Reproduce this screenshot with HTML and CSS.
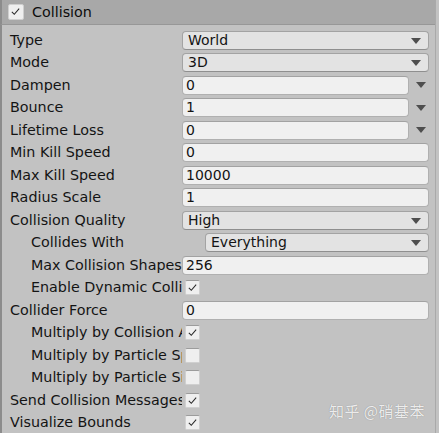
FILE: index.html
```html
<!DOCTYPE html>
<html>
<head>
<meta charset="utf-8">
<link rel="stylesheet" href="styles.css">
</head>
<body>
<div class="frame">
  <div class="header">
    <span class="check on"><svg viewBox="0 0 16 16"><path d="M3.5 8.5 L6.5 11.5 L12.5 4.5" /></svg></span>
    <span class="title">Collision</span>
  </div>
  <div class="panel">
    <div class="row"><span class="label">Type</span><div class="dd">World<i class="tri"></i></div></div>
    <div class="row"><span class="label">Mode</span><div class="dd">3D<i class="tri"></i></div></div>
    <div class="row"><span class="label">Dampen</span><div class="withArrow"><div class="tf">0</div><i class="tri"></i></div></div>
    <div class="row"><span class="label">Bounce</span><div class="withArrow"><div class="tf">1</div><i class="tri"></i></div></div>
    <div class="row"><span class="label">Lifetime Loss</span><div class="withArrow"><div class="tf">0</div><i class="tri"></i></div></div>
    <div class="row"><span class="label">Min Kill Speed</span><div class="tf">0</div></div>
    <div class="row"><span class="label">Max Kill Speed</span><div class="tf">10000</div></div>
    <div class="row"><span class="label">Radius Scale</span><div class="tf">1</div></div>
    <div class="row"><span class="label">Collision Quality</span><div class="dd">High<i class="tri"></i></div></div>
    <div class="row sub"><span class="label">Collides With</span><div class="dd shift">Everything<i class="tri"></i></div></div>
    <div class="row sub"><span class="label">Max Collision Shapes</span><div class="tf">256</div></div>
    <div class="row sub"><span class="label">Enable Dynamic Colliders</span><span class="check on"><svg viewBox="0 0 16 16"><path d="M3.5 8.5 L6.5 11.5 L12.5 4.5" /></svg></span></div>
    <div class="row"><span class="label">Collider Force</span><div class="tf">0</div></div>
    <div class="row sub"><span class="label">Multiply by Collision Angle</span><span class="check on"><svg viewBox="0 0 16 16"><path d="M3.5 8.5 L6.5 11.5 L12.5 4.5" /></svg></span></div>
    <div class="row sub"><span class="label">Multiply by Particle Speed</span><span class="check"></span></div>
    <div class="row sub"><span class="label">Multiply by Particle Size</span><span class="check"></span></div>
    <div class="row"><span class="label">Send Collision Messages</span><span class="check on"><svg viewBox="0 0 16 16"><path d="M3.5 8.5 L6.5 11.5 L12.5 4.5" /></svg></span></div>
    <div class="row"><span class="label">Visualize Bounds</span><span class="check on"><svg viewBox="0 0 16 16"><path d="M3.5 8.5 L6.5 11.5 L12.5 4.5" /></svg></span></div>
  </div>
  <div class="watermark">知乎 @硝基苯</div>
</div>
</body>
</html>
```

FILE: styles.css
```css
html, body {
  margin: 0;
  padding: 0;
  background: #c2c2c2;
}
body {
  font-family: "DejaVu Sans", "Noto Sans CJK SC", sans-serif;
  font-size: 14.3px;
  color: #141414;
  width: 439px;
  height: 433px;
  overflow: hidden;
}
.frame {
  position: relative;
  width: 436px;
  height: 433px;
  border-right: 1px solid #a9a9a9;
  box-sizing: border-box;
}
.header {
  height: 25px;
  box-sizing: border-box;
  background: #a8a8a8;
  border-bottom: 1px solid #979797;
  border-left: 2px solid #8c8c8c;
  display: flex;
  align-items: center;
  padding-left: 6px;
  gap: 8px;
}
.title {
  font-size: 14.3px;
  color: #0c0c0c;
}
.panel {
  border-left: 2px solid #8c8c8c;
  padding-top: 4px;
  height: 408px;
  box-sizing: border-box;
}
.row {
  height: 22.5px;
  display: grid;
  grid-template-columns: 180px 1fr;
  align-items: center;
  padding-right: 6px;
}
.label {
  padding-left: 8px;
  white-space: nowrap;
  overflow: hidden;
  line-height: 19px;
}
.sub .label {
  padding-left: 29px;
}
.dd, .tf {
  height: 19px;
  box-sizing: border-box;
  border-radius: 4px;
  display: flex;
  align-items: center;
  padding-left: 5px;
  line-height: 17px;
  position: relative;
  font-size: 14px;
}
.dd {
  background: #e3e3e3;
  border: 1px solid #a3a3a3;
  border-bottom-color: #8f8f8f;
  padding-right: 22px;
}
.dd.shift {
  margin-left: 23px;
}
.tf {
  background: #f0f0f0;
  border: 1px solid #b0b0b0;
  border-top-color: #a2a2a2;
  padding-left: 3px;
}
.dd .tri {
  position: absolute;
  right: 7px;
  top: 6px;
}
.tri {
  display: block;
  width: 0;
  height: 0;
  border-left: 5px solid transparent;
  border-right: 5px solid transparent;
  border-top: 6px solid #4e4e4e;
}
.withArrow {
  display: grid;
  grid-template-columns: 1fr 20px;
  align-items: center;
}
.withArrow .tri {
  justify-self: center;
  margin-left: 3px;
}
.check {
  width: 15px;
  height: 15px;
  box-sizing: border-box;
  background: #efefef;
  border: 1px solid #d0d0d0;
  border-top-color: #9c9c9c;
  border-radius: 2px;
  display: block;
  margin-left: 3px;
}
.header .check {
  width: 16px;
  height: 16px;
  margin-left: 0;
  border-color: #cfcfcf;
}
.check svg {
  width: 13px;
  height: 13px;
  display: block;
}
.check svg path {
  fill: none;
  stroke: #2a2a2a;
  stroke-width: 1.3;
}
.watermark {
  position: absolute;
  right: 10px;
  bottom: 12px;
  font-family: "Noto Sans CJK SC", sans-serif;
  font-size: 15px;
  color: rgba(255, 255, 255, 0.85);
  text-shadow: 0 0 1px rgba(0, 0, 0, 0.35);
  letter-spacing: 0.5px;
}
```
